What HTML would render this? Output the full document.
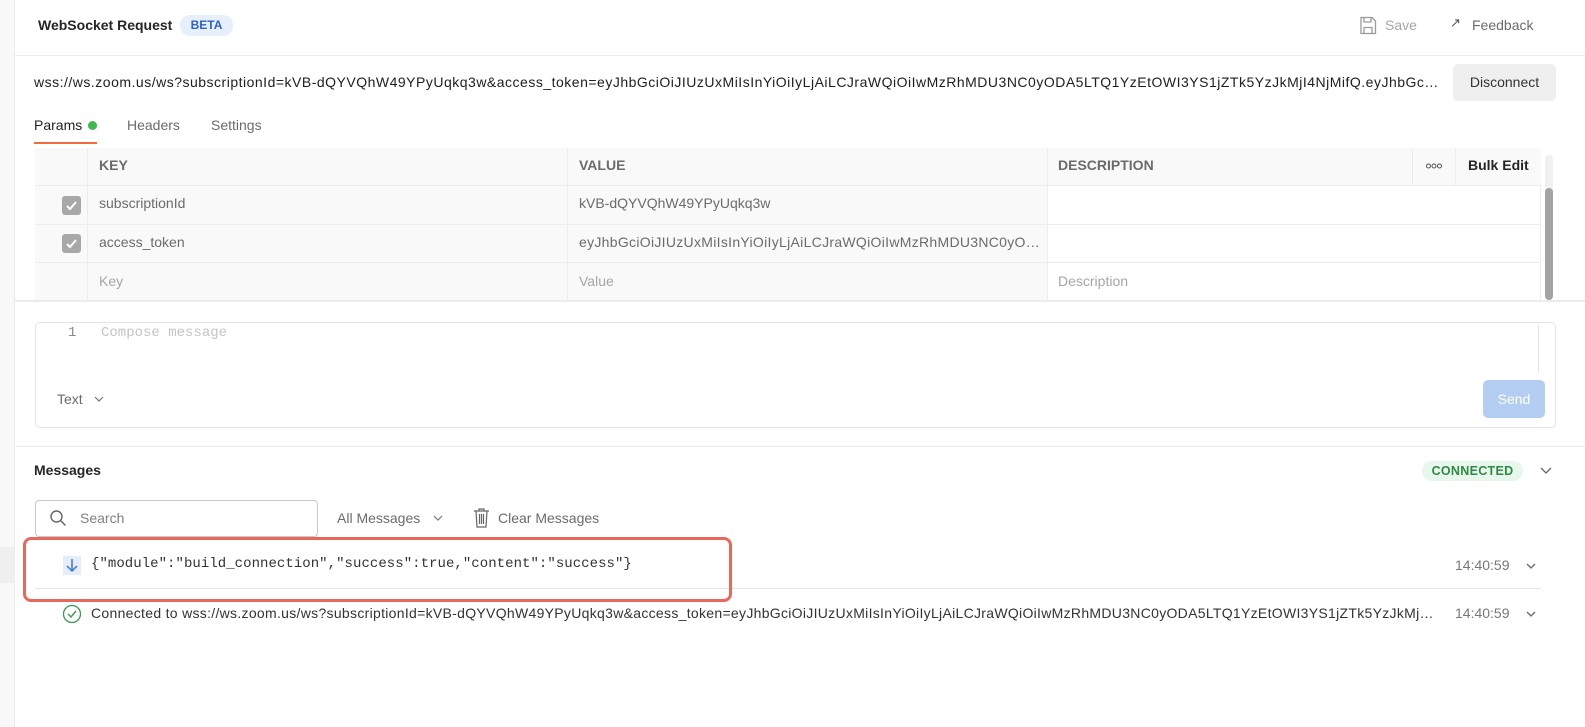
<!DOCTYPE html>
<html><head><meta charset="utf-8">
<style>
*{box-sizing:border-box;margin:0;padding:0}
body{width:1585px;height:727px;overflow:hidden;background:#fff;font-family:"Liberation Sans",Arial,sans-serif;color:#212121;font-size:14px;position:relative}
.a{position:absolute;white-space:nowrap}
.mono{font-family:"Liberation Mono",monospace}
.g{color:#6b6b6b}
.ph{color:#a6a6a6}
.cb{position:absolute;width:19px;height:19px;border-radius:3px;background:#a8a8a8}
.cb svg{position:absolute;left:3px;top:3px}
.ell{overflow:hidden;text-overflow:ellipsis}
</style></head><body>
<div class="a" style="left:0;top:0;width:15px;height:727px;background:#f8f8f8;border-right:1px solid #ececec"></div>
<div class="a" style="left:0;top:547px;width:14px;height:36px;background:#efefef"></div>

<div class="a" style="left:38px;top:17px;font-weight:bold;font-size:14px;color:#262626">WebSocket Request</div>
<div class="a" style="left:180px;top:15px;width:53px;height:21px;border-radius:10px;background:#e7effb;color:#2d63c8;font-weight:bold;font-size:12px;text-align:center;line-height:21px">BETA</div>
<svg class="a" style="left:1359px;top:16px" width="18" height="19" viewBox="0 0 18 19" fill="none" stroke="#9a9a9a" stroke-width="1.3"><path d="M2 1.5h11l3.5 3.5v12.5H2z"/><path d="M5 1.5v4.5h7V1.5"/><path d="M5 17.5v-6h8v6"/></svg>
<div class="a" style="left:1385px;top:17px;color:#a6a6a6">Save</div>
<div class="a" style="left:1450px;top:15px;color:#555;font-size:13px">↗</div>
<div class="a" style="left:1472px;top:17px;color:#6b6b6b">Feedback</div>
<div class="a" style="left:15px;top:55px;width:1570px;height:1px;background:#ececec"></div>

<div class="a ell" style="left:34px;top:74px;width:1408px;font-size:14px;color:#1e1e1e;letter-spacing:0.5px">wss://ws.zoom.us/ws?subscriptionId=kVB-dQYVQhW49YPyUqkq3w&amp;access_token=eyJhbGciOiJIUzUxMiIsInYiOiIyLjAiLCJraWQiOiIwMzRhMDU3NC0yODA5LTQ1YzEtOWI3YS1jZTk5YzJkMjI4NjMifQ.eyJhbGciOiJIUzUxMiIsInYiOiIyLjAiLCJraWQiOiIw</div>
<div class="a" style="left:1453px;top:64px;width:103px;height:37px;border-radius:5px;background:#efefef;color:#333;text-align:center;line-height:37px">Disconnect</div>

<div class="a" style="left:34px;top:117px;color:#212121">Params</div>
<div class="a" style="left:88px;top:121px;width:9px;height:9px;border-radius:50%;background:#3fb950"></div>
<div class="a g" style="left:127px;top:117px">Headers</div>
<div class="a g" style="left:211px;top:117px">Settings</div>
<div class="a" style="left:34px;top:142px;width:63px;height:2px;background:#f26b3a"></div>

<div class="a" style="left:35px;top:148px;width:1506px;height:153px;border:1px solid #ededed;border-top:none;background:#fff"></div>
<div class="a" style="left:35px;top:148px;width:1506px;height:37px;background:#f9f9f9"></div>
<div class="a" style="left:35px;top:185px;width:1012px;height:116px;background:#f9f9f9"></div>
<div class="a" style="left:35px;top:185px;width:1506px;height:1px;background:#ececec"></div>
<div class="a" style="left:35px;top:224px;width:1506px;height:1px;background:#ececec"></div>
<div class="a" style="left:35px;top:262px;width:1506px;height:1px;background:#ececec"></div>
<div class="a" style="left:15px;top:300px;width:1570px;height:2px;background:#ececec"></div>
<div class="a" style="left:87px;top:148px;width:1px;height:153px;background:#ececec"></div>
<div class="a" style="left:567px;top:148px;width:1px;height:153px;background:#ececec"></div>
<div class="a" style="left:1047px;top:148px;width:1px;height:153px;background:#ececec"></div>
<div class="a" style="left:1412px;top:148px;width:1px;height:37px;background:#ececec"></div>
<div class="a" style="left:1455px;top:148px;width:1px;height:37px;background:#ececec"></div>
<div class="a" style="left:99px;top:157px;font-weight:bold;color:#6b6b6b;font-size:14px">KEY</div>
<div class="a" style="left:579px;top:157px;font-weight:bold;color:#6b6b6b">VALUE</div>
<div class="a" style="left:1058px;top:157px;font-weight:bold;color:#6b6b6b">DESCRIPTION</div>
<svg class="a" style="left:1426px;top:163px" width="16" height="6" viewBox="0 0 16 6" fill="none" stroke="#555" stroke-width="1"><circle cx="2.5" cy="3" r="2"/><circle cx="8" cy="3" r="2"/><circle cx="13.5" cy="3" r="2"/></svg>
<div class="a" style="left:1468px;top:157px;font-weight:bold;color:#262626">Bulk Edit</div>
<div class="cb" style="left:62px;top:196px"><svg width="13" height="13" viewBox="0 0 13 13"><path d="M2 7l3 3 6-7" stroke="#fff" stroke-width="2" fill="none"/></svg></div>
<div class="cb" style="left:62px;top:234px"><svg width="13" height="13" viewBox="0 0 13 13"><path d="M2 7l3 3 6-7" stroke="#fff" stroke-width="2" fill="none"/></svg></div>
<div class="a g" style="left:99px;top:195px">subscriptionId</div>
<div class="a g" style="left:579px;top:195px">kVB-dQYVQhW49YPyUqkq3w</div>
<div class="a g" style="left:99px;top:234px">access_token</div>
<div class="a g ell" style="left:579px;top:234px;width:462px;letter-spacing:0.3px">eyJhbGciOiJIUzUxMiIsInYiOiIyLjAiLCJraWQiOiIwMzRhMDU3NC0yODA5LTQ1</div>
<div class="a ph" style="left:99px;top:273px">Key</div>
<div class="a ph" style="left:579px;top:273px">Value</div>
<div class="a ph" style="left:1058px;top:273px">Description</div>
<div class="a" style="left:1545px;top:155px;width:8px;height:145px;border-radius:4px;background:#f1f1f1"></div>
<div class="a" style="left:1545px;top:188px;width:8px;height:112px;border-radius:4px;background:#a4a4a4"></div>

<div class="a" style="left:35px;top:322px;width:1521px;height:106px;border:1px solid #e4e4e4;border-radius:5px"></div>
<div class="a mono" style="left:68px;top:325px;color:#8a8a8a;font-size:14px">1</div>
<div class="a mono" style="left:101px;top:325px;color:#c4c4c4;font-size:14px">Compose message</div>
<div class="a" style="left:1538px;top:325px;width:1px;height:48px;background:#e4e4e4"></div>
<div class="a g" style="left:57px;top:391px">Text</div>
<svg class="a" style="left:93px;top:394px" width="12" height="10" viewBox="0 0 12 10"><path d="M2 3l4 4 4-4" stroke="#777" stroke-width="1.2" fill="none"/></svg>
<div class="a" style="left:1483px;top:380px;width:62px;height:38px;border-radius:5px;background:#b3cdf3;color:#fff;text-align:center;line-height:38px">Send</div>

<div class="a" style="left:15px;top:446px;width:1570px;height:1px;background:#ececec"></div>

<div class="a" style="left:34px;top:462px;font-weight:bold;color:#262626">Messages</div>
<div class="a" style="left:1422px;top:461px;width:101px;height:20px;border-radius:10px;background:#e7f7ec;color:#2f8a47;font-weight:bold;font-size:12.5px;text-align:center;line-height:20px;letter-spacing:0.3px">CONNECTED</div>
<svg class="a" style="left:1539px;top:466px" width="14" height="10" viewBox="0 0 14 10"><path d="M2 2l5 5 5-5" stroke="#666" stroke-width="1.3" fill="none"/></svg>

<div class="a" style="left:35px;top:500px;width:283px;height:37px;border:1px solid #c9c9c9;border-radius:4px"></div>
<svg class="a" style="left:49px;top:509px" width="19" height="19" viewBox="0 0 19 19"><circle cx="7.5" cy="7.5" r="5.5" stroke="#666" stroke-width="1.4" fill="none"/><path d="M11.5 11.5l5 5" stroke="#666" stroke-width="1.4"/></svg>
<div class="a" style="left:80px;top:510px;color:#808080">Search</div>
<div class="a g" style="left:337px;top:510px">All Messages</div>
<svg class="a" style="left:432px;top:513px" width="12" height="10" viewBox="0 0 12 10"><path d="M2 3l4 4 4-4" stroke="#777" stroke-width="1.2" fill="none"/></svg>
<svg class="a" style="left:473px;top:507px" width="17" height="22" viewBox="0 0 17 22" fill="none" stroke="#666" stroke-width="1.2"><path d="M1 4h15M6 4V2h5v2"/><path d="M3 4l1 16h9l1-16"/><path d="M6.5 7v10M8.5 7v10M10.5 7v10"/></svg>
<div class="a g" style="left:498px;top:510px">Clear Messages</div>

<div class="a" style="left:63px;top:556px;width:18px;height:19px;background:#e5edfb"></div>
<svg class="a" style="left:64px;top:557px" width="16" height="17" viewBox="0 0 16 17"><path d="M8 2v12M3 9l5 5 5-5" stroke="#3b73d6" stroke-width="1.5" fill="none"/></svg>
<div class="a mono" style="left:91px;top:556px;font-size:14px;color:#333;letter-spacing:0.05px">{"module":"build_connection","success":true,"content":"success"}</div>
<div class="a" style="left:1455px;top:557px;color:#777">14:40:59</div>
<svg class="a" style="left:1525px;top:561px" width="12" height="10" viewBox="0 0 12 10"><path d="M2 3l4 4 4-4" stroke="#666" stroke-width="1.3" fill="none"/></svg>
<div class="a" style="left:35px;top:588px;width:1506px;height:1px;background:#e6e6e6"></div>
<div class="a" style="left:23px;top:537px;width:709px;height:65px;border:3px solid #e9685c;border-radius:8px"></div>

<svg class="a" style="left:62px;top:604px" width="20" height="20" viewBox="0 0 20 20"><circle cx="10" cy="10" r="8.5" stroke="#3a9a4f" stroke-width="1.3" fill="none"/><path d="M6 10l3 3 5-6" stroke="#3a9a4f" stroke-width="1.4" fill="none"/></svg>
<div class="a ell" style="left:91px;top:605px;width:1345px;color:#333;letter-spacing:0.3px">Connected to wss://ws.zoom.us/ws?subscriptionId=kVB-dQYVQhW49YPyUqkq3w&amp;access_token=eyJhbGciOiJIUzUxMiIsInYiOiIyLjAiLCJraWQiOiIwMzRhMDU3NC0yODA5LTQ1YzEtOWI3YS1jZTk5YzJkMjI4NjMifQ.eyJhbGciOiJIUzUxMiIsInYi</div>
<div class="a" style="left:1455px;top:605px;color:#777">14:40:59</div>
<svg class="a" style="left:1525px;top:609px" width="12" height="10" viewBox="0 0 12 10"><path d="M2 3l4 4 4-4" stroke="#666" stroke-width="1.3" fill="none"/></svg>
</body></html>
